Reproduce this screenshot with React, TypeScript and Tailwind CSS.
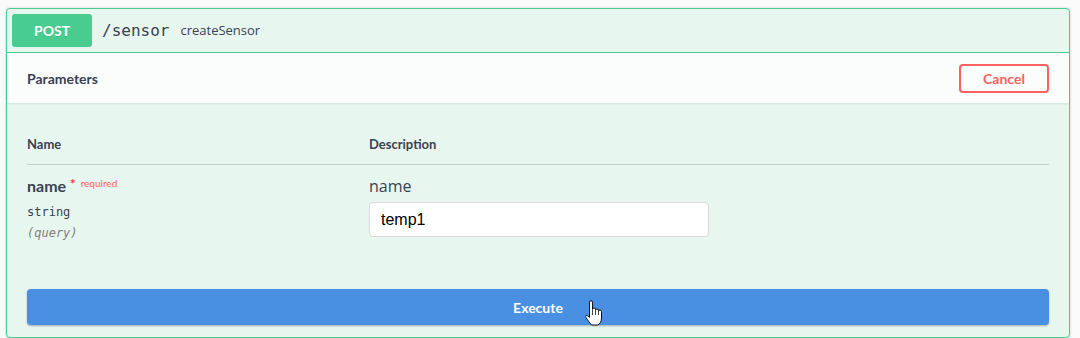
import React from "react";

function HandCursor() {
  return (
    <svg width="20" height="28" viewBox="0 0 20 28" className="absolute left-[557px] top-[11px]">
      <path
        d="M5.5 2.2a1.5 1.5 0 0 1 3 0v7.3a1.5 1.5 0 0 1 3 0v1a1.5 1.5 0 0 1 3 0v1a1.5 1.5 0 0 1 3 0v6.5c0 3.5-1.6 5.8-3.6 7H7.6c-1.8-2-4.6-5.6-5.8-7.8-0.6-1.1 0.6-2.3 1.7-1.6l2 1.8z"
        fill="#ffffff"
        stroke="#111111"
        strokeWidth="1"
        strokeLinejoin="round"
      />
      <path d="M8.5 10v5M11.5 11v4M14.5 12v3" stroke="#111111" strokeWidth="0.8" />
    </svg>
  );
}

export default function App() {
  return (
    <div className="min-h-[338px] bg-[#fafafa] pt-[8px] pl-[6px] text-[#3b4151] font-['Lato','Open_Sans',sans-serif]">
      <div className="w-[1064px] rounded-[4px] border border-[#49cc90] bg-[#e8f6f0] shadow-[0_0_3px_rgba(0,0,0,0.19)]">
        {/* summary */}
        <div className="flex items-center p-[5px] border-b border-[#49cc90]">
          <div className="w-[80px] h-[33px] flex items-center justify-center rounded-[3px] bg-[#49cc90] text-white text-[14px] font-bold [text-shadow:0_1px_0_rgba(0,0,0,0.1)]">
            POST
          </div>
          <span className="pl-[10px] pr-[11px] text-[16px] font-['DejaVu_Sans_Mono','Liberation_Mono',monospace]">
            /sensor
          </span>
          <span className="text-[13px] font-['Open_Sans',sans-serif]">createSensor</span>
        </div>

        {/* parameters header */}
        <div className="h-[50px] px-[20px] flex items-center justify-between bg-white/80 shadow-[0_1px_2px_rgba(0,0,0,0.1)]">
          <span className="text-[14px] font-bold">Parameters</span>
          <button className="w-[90px] h-[29px] rounded-[4px] border-2 border-[#ff6060] text-[#ff6060] text-[14px] font-bold bg-transparent">
            Cancel
          </button>
        </div>

        {/* table */}
        <div className="px-[20px] pt-[20px]">
          <div className="flex h-[42px] items-center pt-[2px] border-b border-[rgba(59,65,81,0.2)] text-[13px] font-bold">
            <div className="w-[342px]">Name</div>
            <div>Description</div>
          </div>
          <div className="flex pt-[11px]">
            <div className="w-[342px]">
              <div className="flex items-start h-[20px]">
                <span className="text-[16px] font-bold leading-[20px]">name</span>
                <span className="ml-[4px] text-[13px] leading-[16px] text-[#ff3030] font-bold">*</span>
                <span className="ml-[5px] text-[10px] leading-[14px] text-[#ff6060]">required</span>
              </div>
              <div className="mt-[8px] text-[12px] leading-[16px] font-['DejaVu_Sans_Mono','Liberation_Mono',monospace]">
                string
              </div>
              <div className="mt-[5px] text-[12px] leading-[16px] italic text-[#808080] font-['DejaVu_Sans_Mono','Liberation_Mono',monospace]">
                (query)
              </div>
            </div>
            <div>
              <div className="text-[16px] leading-[20px] font-['Open_Sans',sans-serif]">name</div>
              <div className="mt-[6px] w-[340px] h-[35px] rounded-[4px] border border-[#d9d9d9] bg-white flex items-center px-[11px] text-[16px] text-black font-['Liberation_Sans',Arial,sans-serif]">
                temp1
              </div>
            </div>
          </div>
          <div className="pt-[48px] pb-[12px]">
            <div className="relative">
              <button className="w-full h-[36px] rounded-[4px] bg-[#4990e2] text-white text-[14px] font-bold shadow-[0_1px_2px_rgba(0,0,0,0.3)]">
                Execute
              </button>
              <HandCursor />
            </div>
          </div>
        </div>
      </div>
    </div>
  );
}
